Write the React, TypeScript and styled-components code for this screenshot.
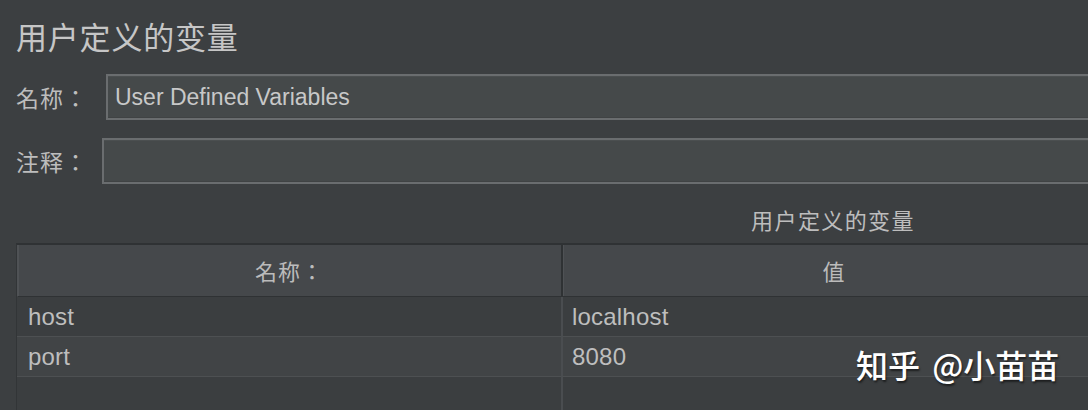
import React from "react";
import styled, { createGlobalStyle } from "styled-components";

const GlobalStyle = createGlobalStyle`
  html, body {
    margin: 0;
    padding: 0;
    background: #3c3f41;
    overflow: hidden;
  }
  body {
    font-family: "Liberation Sans", "Noto Sans CJK SC", sans-serif;
    color: #bbbbbb;
  }
`;

const Page = styled.div`
  position: relative;
  box-sizing: border-box;
  width: 1666px;
  height: 410px;
  padding-left: 16px;
  display: flex;
  flex-direction: column;
  background: #3c3f41;
`;

const Title = styled.h1`
  margin: 0;
  padding-top: 14px;
  height: 44px;
  line-height: 44px;
  font-family: "Noto Sans CJK SC", sans-serif;
  font-weight: 400;
  font-size: 31px;
  letter-spacing: 0.8px;
  color: #c6c6c6;
`;

const FieldRow = styled.div<{ $top: number }>`
  display: flex;
  align-items: center;
  margin-top: ${(p) => p.$top}px;
  height: 46px;
`;

const Label = styled.label<{ $w: number }>`
  flex: 0 0 ${(p) => p.$w}px;
  font-family: "Noto Sans CJK TC", "Noto Sans CJK SC", sans-serif;
  font-size: 23px;
  letter-spacing: 1px;
  color: #bdbdbd;
  line-height: 46px;
`;

const Input = styled.div`
  flex: 1;
  box-sizing: border-box;
  height: 46px;
  border: 2px solid #6a6d6f;
  background: #45494a;
  box-shadow: inset 0 1px 0 #4b4f50, inset 0 -1px 0 #404344;
  padding-left: 7px;
  font-family: "Liberation Sans", sans-serif;
  font-size: 23px;
  line-height: 42px;
  color: #c8c8c8;
  white-space: nowrap;
`;

const Caption = styled.div`
  margin-top: 20px;
  margin-bottom: 9px;
  padding-right: 16px;
  height: 30px;
  line-height: 30px;
  text-align: center;
  font-family: "Noto Sans CJK SC", sans-serif;
  font-size: 22px;
  letter-spacing: 1.4px;
  color: #bdbdbd;
`;

const Table = styled.div`
  width: 1088px;
  display: grid;
  grid-template-columns: 544px 544px;
  border-top: 2px solid #2f3234;
  border-left: 1px solid #323537;
`;

const HeadCell = styled.div<{ $first?: boolean }>`
  box-sizing: border-box;
  height: 52px;
  background: #45484b;
  border-bottom: 1px solid #2f3234;
  border-left: ${(p) => (p.$first ? "1px solid #4f5255" : "2px solid #2f3234")};
  box-shadow: inset 1px 0 0 #4f5255;
  display: flex;
  align-items: center;
  justify-content: center;
  font-family: "Noto Sans CJK TC", "Noto Sans CJK SC", sans-serif;
  font-size: 22px;
  letter-spacing: 1px;
  color: #bbbbbb;
  padding-bottom: 2px;
`;

const Cell = styled.div<{ $selected?: boolean; $first?: boolean }>`
  box-sizing: border-box;
  height: 40px;
  border-bottom: 1px solid #4d5052;
  border-left: ${(p) => (p.$first ? "none" : "2px solid #4a4d50")};
  background: ${(p) => (p.$selected ? "#414446" : "#3b3e40")};
  padding-left: ${(p) => (p.$first ? "11px" : "9px")};
  font-family: "Liberation Sans", sans-serif;
  font-size: 24px;
  letter-spacing: 0.2px;
  line-height: 39px;
  color: #bebebe;
  white-space: nowrap;
`;

const Watermark = styled.div`
  position: absolute;
  left: 856px;
  top: 342px;
  font-family: "Noto Sans CJK SC", sans-serif;
  font-weight: 500;
  font-size: 32px;
  letter-spacing: 0;
  word-spacing: 5px;
  line-height: 44px;
  color: #ffffff;
  text-shadow: 1px 2px 2px rgba(0, 0, 0, 0.55);
  white-space: nowrap;
`;

const rows = [
  { name: "host", value: "localhost", selected: false },
  { name: "port", value: "8080", selected: true },
  { name: "", value: "", selected: false },
];

export default function App() {
  return (
    <>
      <GlobalStyle />
      <Page>
        <Title>用户定义的变量</Title>
        <FieldRow $top={16}>
          <Label $w={90}>名称：</Label>
          <Input>User Defined Variables</Input>
        </FieldRow>
        <FieldRow $top={18}>
          <Label $w={86}>注释：</Label>
          <Input />
        </FieldRow>
        <Caption>用户定义的变量</Caption>
        <Table>
          <HeadCell $first>名称：</HeadCell>
          <HeadCell>值</HeadCell>
          {rows.map((r, i) => (
            <React.Fragment key={i}>
              <Cell $first $selected={r.selected}>{r.name}</Cell>
              <Cell $selected={r.selected}>{r.value}</Cell>
            </React.Fragment>
          ))}
        </Table>
        <Watermark>知乎 @小苗苗</Watermark>
      </Page>
    </>
  );
}
